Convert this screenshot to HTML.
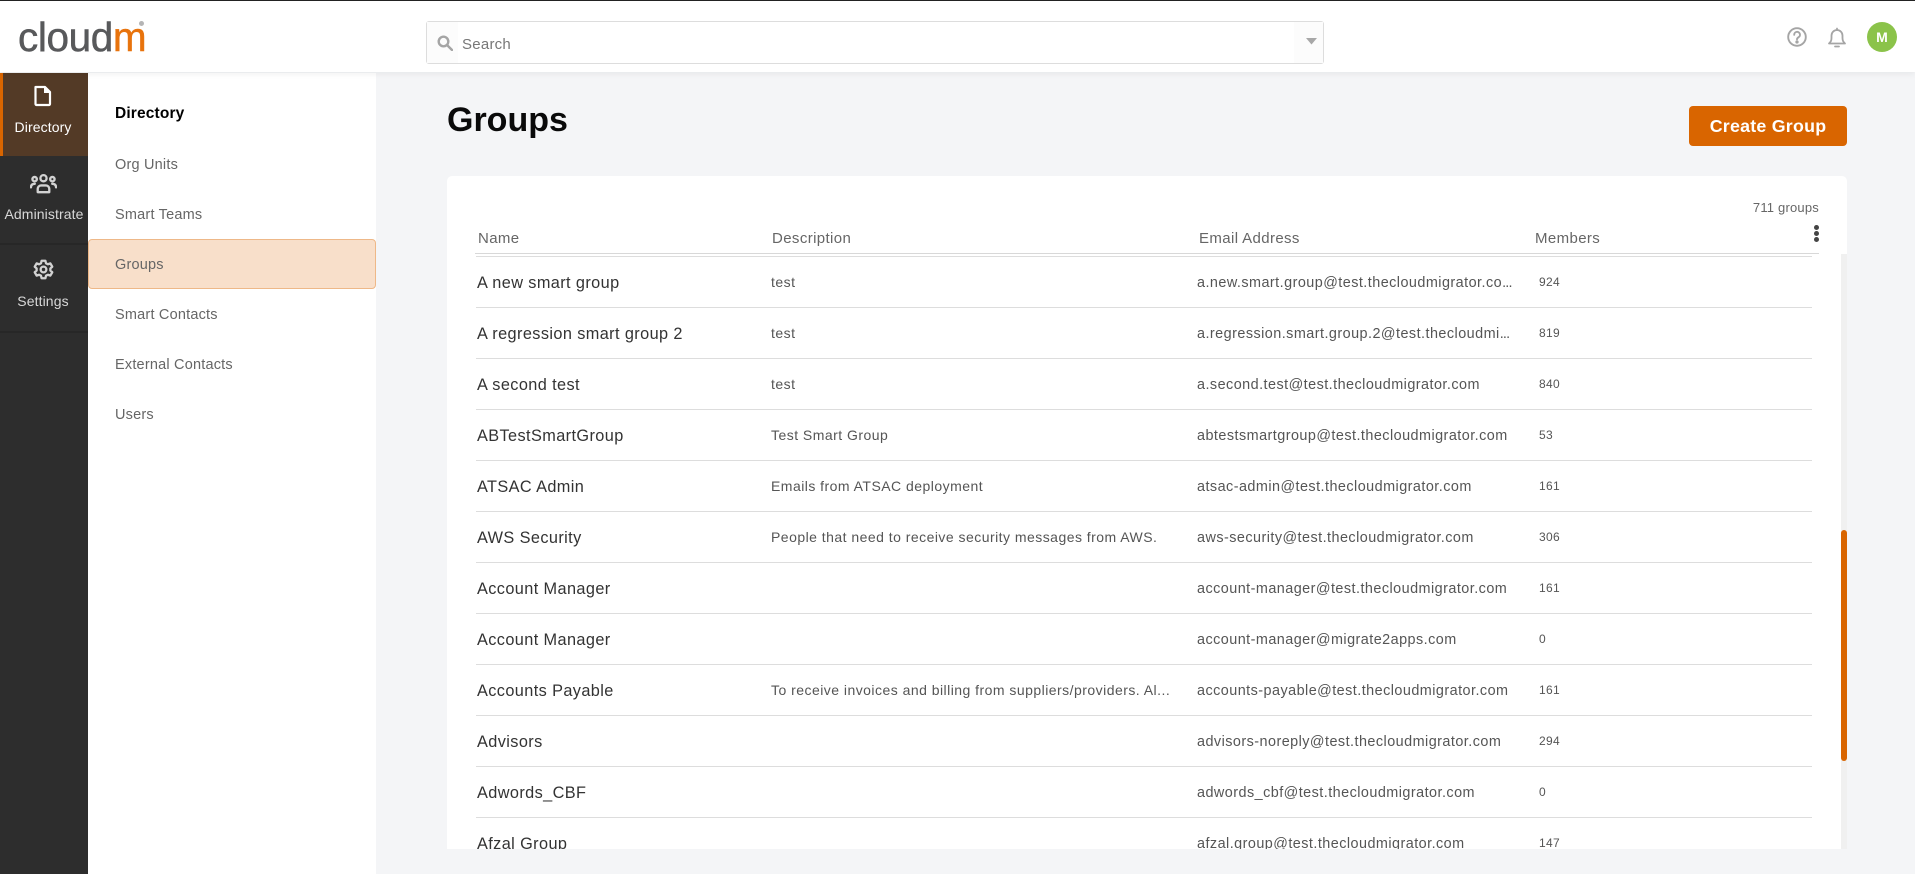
<!DOCTYPE html>
<html lang="en"><head><meta charset="utf-8"><title>Groups</title>
<style>
*{box-sizing:border-box}
html,body{margin:0;padding:0;width:1915px;height:874px;overflow:hidden;background:#f4f5f7;font-family:"Liberation Sans",sans-serif}
.a{position:absolute;white-space:nowrap}
#top{position:absolute;left:0;top:0;width:1915px;height:72px;background:#fff;border-top:1px solid #222;box-shadow:0 2px 6px rgba(0,0,0,.06);z-index:5}
#rail{position:absolute;left:0;top:73px;width:88px;height:801px;background:#2d2d2d}
#side{position:absolute;left:88px;top:73px;width:288px;height:801px;background:#fff}
.rl{position:absolute;left:-1px;width:88px;text-align:center;font-size:14px;letter-spacing:.1px;color:#d8d8d8;line-height:16px}
.s{position:absolute;left:115px;font-size:14.5px;letter-spacing:.2px;color:#666;line-height:18px;white-space:nowrap}
#card{position:absolute;left:447px;top:176px;width:1400px;height:673px;background:#fff;border-radius:5px 5px 0 0;overflow:hidden}
.h{position:absolute;top:54px;font-size:15px;letter-spacing:.38px;color:#666;line-height:18px;white-space:nowrap}
.row{position:absolute;left:29px;width:1336px;height:51px;border-bottom:1px solid #ddd}
.row span{position:absolute;top:16px;line-height:18px;white-space:nowrap;color:#555}
.row span.n{top:17px;left:1px;font-size:16.3px;letter-spacing:.4px;color:#333}
.d{left:295px;font-size:14px;letter-spacing:.47px}
.row span.e{top:17px;left:721px;font-size:14.4px;letter-spacing:.46px}
.m{left:1063px;font-size:12px;letter-spacing:.35px}
i{font-style:normal;letter-spacing:-.8px}
</style></head><body>
<div id="top">
  <div class="a" style="left:18px;top:13px;font-size:40.5px;line-height:46px;letter-spacing:-.4px;color:#58595b;-webkit-text-stroke:.5px #58595b">cloud<span style="color:#e8730c;letter-spacing:0;-webkit-text-stroke:.5px #e8730c">m</span></div>
  <div class="a" style="left:139px;top:20px;width:5px;height:5px;border-radius:50%;background:#b5b5b5"></div>
  <div class="a" style="left:426px;top:20px;width:898px;height:43px;border:1px solid #ddd;border-radius:3px;background:#fff">
    <div class="a" style="left:0;top:0;width:31px;height:41px;background:#fcfcfc"></div>
    <div class="a" style="right:0;top:0;width:29px;height:41px;background:#fcfcfc"></div>
    <svg class="a" style="left:10px;top:13px" width="16" height="16" viewBox="0 0 16 16" fill="none" stroke="#a5a5a5" stroke-width="2.4"><circle cx="6.5" cy="6.5" r="4.8"/><path d="M10 10l5 5" stroke-linecap="round"/></svg>
    <div class="a" style="left:35px;top:13px;font-size:15px;letter-spacing:.25px;line-height:20px;color:#777">Search</div>
    <svg class="a" style="left:879px;top:16px" width="11" height="7" viewBox="0 0 11 7"><path d="M0 0h11L5.500 6.500z" fill="#a8a8a8"/></svg>
  </div>
  <svg class="a" style="left:1786px;top:25px" width="22" height="22" viewBox="0 0 22 22" fill="none" stroke="#a5a5a5" stroke-width="1.9"><circle cx="11" cy="11" r="8.800"/><path d="M8.200 8.800a2.900 2.900 0 1 1 4.400 2.400c-1 .6-1.600 1-1.600 2.200" stroke-linecap="round"/><circle cx="11" cy="16" r=".7" fill="#a5a5a5"/></svg>
  <svg class="a" style="left:1826px;top:25px" width="22" height="24" viewBox="0 0 22 24" fill="none" stroke="#a5a5a5" stroke-width="1.800"><path d="M3 17.500c1.600-1.500 2.500-2.600 2.500-5.500V9.500a5.500 5.500 0 0 1 11 0V12c0 2.900.9 4 2.500 5.500z" stroke-linejoin="round"/><path d="M11 4V2.500M9 20.500h4" stroke-linecap="round"/></svg>
  <div class="a" style="left:1867px;top:21px;width:30px;height:30px;border-radius:50%;background:#8bc34a;color:#fff;text-align:center;font-size:14px;font-weight:bold;line-height:30px">M</div>
</div>

<div id="rail">
  <div class="a" style="left:0;top:0;width:88px;height:83px;background:#533a26;border-left:3px solid #d96500"></div>
  <div class="a" style="left:0;top:170px;width:88px;height:2px;background:#272727"></div>
  <div class="a" style="left:0;top:258px;width:88px;height:2px;background:#272727"></div>
  <svg class="a" style="left:33px;top:12px" width="20" height="22" viewBox="0 0 20 22" fill="none" stroke="#fff" stroke-width="2.2"><path d="M2.500 2h9.500l5 5v12a1 1 0 0 1-1 1H3.500a1 1 0 0 1-1-1z" stroke-linejoin="round"/><path d="M11.500 2.500V7.500H17" fill="#fff" stroke-width="1"/></svg>
  <div class="rl" style="top:46px;color:#fff">Directory</div>
  <svg class="a" style="left:30px;top:100px" width="27" height="21" viewBox="0 0 28 21" fill="none" stroke="#d2d2d2" stroke-width="2.400"><circle cx="14" cy="5" r="3.200"/><circle cx="4.800" cy="6" r="2.300"/><circle cx="23.200" cy="6" r="2.300"/><path d="M8 19.500v-3.500a3.500 3.500 0 0 1 3.500-3.500h5a3.500 3.500 0 0 1 3.500 3.500v3.500z" stroke-linejoin="round"/><path d="M1 14.500c0-2.500 1.500-3.700 4-3.700M27 14.500c0-2.500-1.500-3.700-4-3.700" stroke-linecap="round"/></svg>
  <div class="rl" style="top:133px;left:0">Administrate</div>
  <svg class="a" style="left:33px;top:186px" width="21" height="21" viewBox="0 0 22 22" fill="none" stroke="#d2d2d2" stroke-width="2.400" stroke-linejoin="round"><path d="M9 1.800h4l.6 2.700 2 1 2.600-.9 2 3.500-2 1.800v2.200l2 1.800-2 3.500-2.600-.9-2 1-.6 2.700H9l-.6-2.700-2-1-2.600.9-2-3.500 2-1.800V9.900L1.800 8.100l2-3.500 2.600.9 2-1z"/><circle cx="11" cy="11" r="3"/></svg>
  <div class="rl" style="top:220px">Settings</div>
</div>

<div id="side"></div>
<div class="a" style="left:88px;top:239px;width:288px;height:50px;background:#f8dfca;border:1px solid #eeb888;border-radius:4px"></div>
<div class="s" style="top:105px;font-weight:bold;font-size:15.500px;letter-spacing:.15px;color:#000">Directory</div>
<div class="s" style="top:156px">Org Units</div>
<div class="s" style="top:206px">Smart Teams</div>
<div class="s" style="top:256px">Groups</div>
<div class="s" style="top:306px">Smart Contacts</div>
<div class="s" style="top:356px">External Contacts</div>
<div class="s" style="top:406px">Users</div>

<div class="a" style="left:447px;top:99px;font-size:34px;font-weight:bold;letter-spacing:0;line-height:42px;color:#0a0a0a">Groups</div>
<div class="a" style="left:1689px;top:106px;width:158px;height:40px;background:#d96500;border-radius:4px;color:#fff;text-align:center;font-weight:bold;font-size:17.800px;letter-spacing:.25px;line-height:40px">Create Group</div>

<div id="card">
  <div class="a" style="right:28px;top:23px;font-size:13px;letter-spacing:.2px;color:#666;line-height:18px">711 groups</div>
  <div class="a" style="left:1367px;top:49px;width:5px;height:5px;border-radius:50%;background:#444"></div>
  <div class="a" style="left:1367px;top:55px;width:5px;height:5px;border-radius:50%;background:#444"></div>
  <div class="a" style="left:1367px;top:61px;width:5px;height:5px;border-radius:50%;background:#444"></div>
  <div class="h" style="left:31px">Name</div>
  <div class="h" style="left:325px">Description</div>
  <div class="h" style="left:752px">Email Address</div>
  <div class="h" style="left:1088px">Members</div>
  <div class="a" style="left:28px;top:77px;width:1344px;height:1px;background:#d8d8d8"></div>
  <div class="a" style="left:29px;top:80px;width:1336px;height:1px;background:#ddd"></div>
  <div class="a" style="left:1394px;top:78px;width:6px;height:595px;background:#f0f0f0"></div>
  <div class="a" style="left:1394px;top:354px;width:6px;height:231px;background:#d96500;border-radius:3px"></div>

  <div class="row" style="top:81px"><span class="n">A new smart group</span><span class="d">test</span><span class="e">a.new.smart.group@test.thecloudmigrator.co<i>...</i></span><span class="m">924</span></div>
  <div class="row" style="top:132px"><span class="n">A regression smart group 2</span><span class="d">test</span><span class="e">a.regression.smart.group.2@test.thecloudmi<i>...</i></span><span class="m">819</span></div>
  <div class="row" style="top:183px"><span class="n">A second test</span><span class="d">test</span><span class="e">a.second.test@test.thecloudmigrator.com</span><span class="m">840</span></div>
  <div class="row" style="top:234px"><span class="n">ABTestSmartGroup</span><span class="d">Test Smart Group</span><span class="e">abtestsmartgroup@test.thecloudmigrator.com</span><span class="m">53</span></div>
  <div class="row" style="top:285px"><span class="n">ATSAC Admin</span><span class="d">Emails from ATSAC deployment</span><span class="e">atsac-admin@test.thecloudmigrator.com</span><span class="m">161</span></div>
  <div class="row" style="top:336px"><span class="n">AWS Security</span><span class="d">People that need to receive security messages from AWS.</span><span class="e">aws-security@test.thecloudmigrator.com</span><span class="m">306</span></div>
  <div class="row" style="top:387px"><span class="n">Account Manager</span><span class="e">account-manager@test.thecloudmigrator.com</span><span class="m">161</span></div>
  <div class="row" style="top:438px"><span class="n">Account Manager</span><span class="e">account-manager@migrate2apps.com</span><span class="m">0</span></div>
  <div class="row" style="top:489px"><span class="n">Accounts Payable</span><span class="d">To receive invoices and billing from suppliers/providers. Al...</span><span class="e">accounts-payable@test.thecloudmigrator.com</span><span class="m">161</span></div>
  <div class="row" style="top:540px"><span class="n">Advisors</span><span class="e">advisors-noreply@test.thecloudmigrator.com</span><span class="m">294</span></div>
  <div class="row" style="top:591px"><span class="n">Adwords_CBF</span><span class="e">adwords_cbf@test.thecloudmigrator.com</span><span class="m">0</span></div>
  <div class="row" style="top:642px;border:0"><span class="n">Afzal Group</span><span class="e">afzal.group@test.thecloudmigrator.com</span><span class="m">147</span></div>
</div>
</body></html>
